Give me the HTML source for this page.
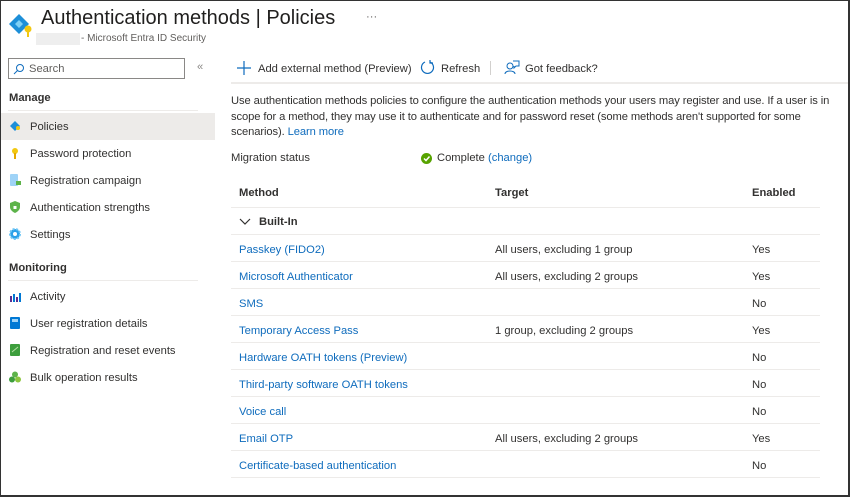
<!DOCTYPE html>
<html><head><style>
*{margin:0;padding:0;box-sizing:border-box}
body{width:850px;height:497px;overflow:hidden;background:#fff;font-family:"Liberation Sans",sans-serif;font-size:11.2px;color:#323130;position:relative}
.frame{position:absolute;left:0;top:0;width:850px;height:497px;border:1px solid #333;border-right:2px solid #333;border-bottom:2px solid #333;pointer-events:none}
.a{position:absolute;white-space:nowrap}
.link{color:#0f6cbd}
.nav{position:absolute;left:0;width:215px;height:27px}
.nav .t{position:absolute;left:30px;top:8px}
.nav .i{position:absolute;left:9px;top:7px;width:12px;height:12px}
.hl{position:absolute;height:1px;background:#edebe9}
.r{top:0}
</style></head><body>
<svg class="a" style="left:8px;top:12px" width="26" height="26" viewBox="0 0 26 26"><path d="M11 2 L21 12 L11 22 L1 12Z" fill="#1d8fd8"/><path d="M11 8 L15 12 L11 16 L7 12Z" fill="#7fd0f5"/><circle cx="20" cy="17" r="3.5" fill="#f2c811"/><rect x="19" y="19" width="2" height="6" fill="#f2c811"/></svg>
<div class="a" style="left:41px;top:7px;font-size:20px;color:#201f1e">Authentication methods | Policies</div>
<div class="a" style="left:366px;top:11px;color:#605e5c">···</div>
<div class="a" style="left:36px;top:33px;width:44px;height:12px;background:#eee"></div>
<div class="a" style="left:81px;top:33px;font-size:10px;color:#605e5c">- Microsoft Entra ID Security</div>
<div class="a" style="left:8px;top:58px;width:177px;height:21px;border:1px solid #8a8886"></div>
<svg class="a" style="left:13px;top:63px" width="12" height="12" viewBox="0 0 12 12"><circle cx="7" cy="5" r="3.5" fill="none" stroke="#0f6cbd"/><path d="M4.5 7.5L1 11" stroke="#0f6cbd"/></svg>
<div class="a" style="left:29px;top:63px;color:#605e5c">Search</div>
<div class="a" style="left:197px;top:61px;color:#8a8886">«</div>
<div class="a" style="left:9px;top:92px;font-weight:bold">Manage</div>
<div class="hl" style="left:8px;top:110px;width:190px"></div>
<div class="nav" style="top:113px;background:#edebe9"><svg class="i" viewBox="0 0 12 12"><path d="M6 1L11 6L6 11L1 6Z" fill="#1d8fd8"/><circle cx="9" cy="8" r="2" fill="#f2c811"/></svg><span class="t">Policies</span></div>
<div class="nav" style="top:140px"><svg class="i" viewBox="0 0 12 12"><circle cx="6" cy="4" r="3" fill="#f2c811"/><rect x="5" y="6" width="2" height="6" fill="#e5a800"/></svg><span class="t">Password protection</span></div>
<div class="nav" style="top:167px"><svg class="i" viewBox="0 0 12 12"><rect x="1" y="0" width="8" height="12" rx="1" fill="#9fd3f7"/><rect x="7" y="7" width="5" height="4" fill="#5db34a"/></svg><span class="t">Registration campaign</span></div>
<div class="nav" style="top:194px"><svg class="i" viewBox="0 0 12 12"><path d="M6 0L11 2V6C11 9 8 11 6 12C4 11 1 9 1 6V2Z" fill="#5db34a"/><rect x="4.5" y="5" width="3" height="3" fill="#fff"/></svg><span class="t">Authentication strengths</span></div>
<div class="nav" style="top:221px"><svg class="i" viewBox="0 0 12 12"><circle cx="6" cy="6" r="5" fill="#2aa0e8" stroke="#6fc6f5" stroke-width="2" stroke-dasharray="2 1.5"/><circle cx="6" cy="6" r="2" fill="#fff"/></svg><span class="t">Settings</span></div>
<div class="a" style="left:9px;top:262px;font-weight:bold">Monitoring</div>
<div class="hl" style="left:8px;top:280px;width:190px"></div>
<div class="nav" style="top:283px"><svg class="i" viewBox="0 0 12 12"><rect x="1" y="6" width="2" height="6" fill="#5c2d91"/><rect x="4" y="4" width="2" height="8" fill="#0078d4"/><rect x="7" y="7" width="2" height="5" fill="#5c2d91"/><rect x="10" y="3" width="2" height="9" fill="#0078d4"/></svg><span class="t">Activity</span></div>
<div class="nav" style="top:310px"><svg class="i" viewBox="0 0 12 12"><rect x="1" y="0" width="10" height="12" rx="1" fill="#0078d4"/><rect x="3" y="2" width="6" height="3" fill="#9fd3f7"/></svg><span class="t">User registration details</span></div>
<div class="nav" style="top:337px"><svg class="i" viewBox="0 0 12 12"><rect x="1" y="0" width="10" height="12" rx="1" fill="#3d9e3d"/><path d="M3 8L9 3" stroke="#b7e0a5"/></svg><span class="t">Registration and reset events</span></div>
<div class="nav" style="top:364px"><svg class="i" viewBox="0 0 12 12"><circle cx="6" cy="3.5" r="3" fill="#5db34a"/><circle cx="3" cy="8.5" r="3" fill="#3d9e3d"/><circle cx="9" cy="8.5" r="3" fill="#8cc63f"/></svg><span class="t">Bulk operation results</span></div>

<svg class="a" style="left:237px;top:61px" width="14" height="14" viewBox="0 0 14 14"><path d="M7 0V14M0 7H14" stroke="#0f6cbd" stroke-width="1.2"/></svg>
<div class="a" style="left:258px;top:63px">Add external method (Preview)</div>
<svg class="a" style="left:420px;top:60px" width="15" height="15" viewBox="0 0 15 15"><path d="M5 2A6 6 0 1 0 10 2" fill="none" stroke="#0f6cbd" stroke-width="1.2"/><path d="M10 0V3H13" fill="none" stroke="#0f6cbd" stroke-width="1.2"/></svg>
<div class="a" style="left:441px;top:63px">Refresh</div>
<div class="a" style="left:490px;top:61px;width:1px;height:14px;background:#d2d0ce"></div>
<svg class="a" style="left:504px;top:60px" width="16" height="15" viewBox="0 0 16 15"><circle cx="6" cy="6" r="3" fill="none" stroke="#0f6cbd"/><path d="M1 14C1 10 11 10 11 14" fill="none" stroke="#0f6cbd"/><path d="M9 1H15V6H12L10 8V6" fill="none" stroke="#0f6cbd"/></svg>
<div class="a" style="left:525px;top:63px">Got feedback?</div>
<div class="hl" style="left:231px;top:82px;width:617px;height:2px"></div>

<div class="a" style="left:231px;top:94px;line-height:15.5px;white-space:normal;width:612px;letter-spacing:-0.1px">Use authentication methods policies to configure the authentication methods your users may register and use. If a user is in scope for a method, they may use it to authenticate and for password reset (some methods aren't supported for some scenarios). <span class="link">Learn more</span></div>
<div class="a" style="left:231px;top:152px">Migration status</div>
<svg class="a" style="left:421px;top:153px" width="11" height="11" viewBox="0 0 11 11"><circle cx="5.5" cy="5.5" r="5.5" fill="#57a300"/><path d="M3 5.5L5 7.5L8.5 3.5" fill="none" stroke="#fff" stroke-width="1.5"/></svg>
<div class="a" style="left:437px;top:152px">Complete <span class="link">(change)</span></div>

<div class="a" style="left:239px;top:187px;font-weight:bold">Method</div>
<div class="a" style="left:495px;top:187px;font-weight:bold">Target</div>
<div class="a" style="left:752px;top:187px;font-weight:bold">Enabled</div>
<div class="hl" style="left:231px;top:207px;width:589px"></div>
<svg class="a" style="left:239px;top:218px" width="12" height="8" viewBox="0 0 12 8"><path d="M1 1L6 6L11 1" fill="none" stroke="#323130" stroke-width="1.2"/></svg>
<div class="a" style="left:259px;top:216px;font-weight:bold">Built-In</div>
<div class="hl" style="left:231px;top:234px;width:589px"></div>

<div class="a link" style="left:239px;top:244px">Passkey (FIDO2)</div><div class="a" style="left:495px;top:244px">All users, excluding 1 group</div><div class="a" style="left:752px;top:244px">Yes</div>
<div class="hl" style="left:231px;top:261px;width:589px"></div>
<div class="a link" style="left:239px;top:271px">Microsoft Authenticator</div><div class="a" style="left:495px;top:271px">All users, excluding 2 groups</div><div class="a" style="left:752px;top:271px">Yes</div>
<div class="hl" style="left:231px;top:288px;width:589px"></div>
<div class="a link" style="left:239px;top:298px">SMS</div><div class="a" style="left:752px;top:298px">No</div>
<div class="hl" style="left:231px;top:315px;width:589px"></div>
<div class="a link" style="left:239px;top:325px">Temporary Access Pass</div><div class="a" style="left:495px;top:325px">1 group, excluding 2 groups</div><div class="a" style="left:752px;top:325px">Yes</div>
<div class="hl" style="left:231px;top:342px;width:589px"></div>
<div class="a link" style="left:239px;top:352px">Hardware OATH tokens (Preview)</div><div class="a" style="left:752px;top:352px">No</div>
<div class="hl" style="left:231px;top:369px;width:589px"></div>
<div class="a link" style="left:239px;top:379px">Third-party software OATH tokens</div><div class="a" style="left:752px;top:379px">No</div>
<div class="hl" style="left:231px;top:396px;width:589px"></div>
<div class="a link" style="left:239px;top:406px">Voice call</div><div class="a" style="left:752px;top:406px">No</div>
<div class="hl" style="left:231px;top:423px;width:589px"></div>
<div class="a link" style="left:239px;top:433px">Email OTP</div><div class="a" style="left:495px;top:433px">All users, excluding 2 groups</div><div class="a" style="left:752px;top:433px">Yes</div>
<div class="hl" style="left:231px;top:450px;width:589px"></div>
<div class="a link" style="left:239px;top:460px">Certificate-based authentication</div><div class="a" style="left:752px;top:460px">No</div>
<div class="hl" style="left:231px;top:477px;width:589px"></div>
<div class="frame"></div>
</body></html>
